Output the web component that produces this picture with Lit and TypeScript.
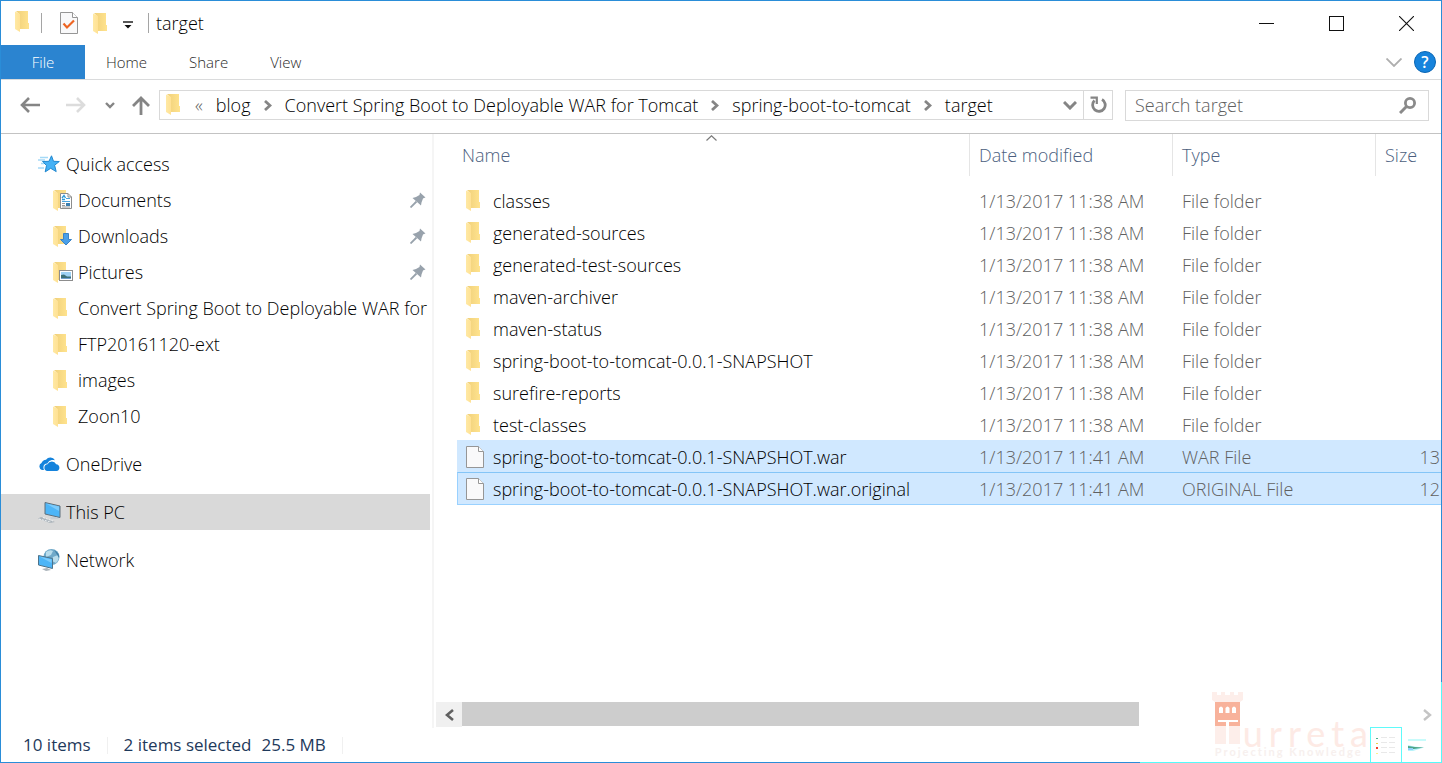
import { LitElement, html, css, svg, nothing } from "lit";
import { customElement, property } from "lit/decorators.js";

const folderShape = svg`
  <defs>
    <linearGradient id="back" x1="0" x2="1"><stop offset="0" stop-color="#f0d07a"/><stop offset="1" stop-color="#ffe38e"/></linearGradient>
    <linearGradient id="flap" x1="0" x2="1"><stop offset="0" stop-color="#ffe9a4"/><stop offset="1" stop-color="#ffe194"/></linearGradient>
  </defs>
  <path d="M1 0H13V12H14V18H4V3Z" fill="url(#back)"/>
  <path d="M0 0.5L5 3V21L0 18Z" fill="url(#flap)"/>`;

const page = svg`
  <path d="M0.5 0.5H12.500L17.500 5.500V21.500H0.500Z" fill="#f9f9fa" stroke="#969696"/>
  <path d="M12.500 0.500V5.500H17.500" fill="#fff" stroke="#969696"/>`;

const icons: Record<string, { w: number; h: number; d: unknown }> = {
  folder: { w: 14, h: 21, d: folderShape },
  documents: {
    w: 20, h: 21,
    d: svg`${folderShape}<path d="M7.500 3.500H15L18.500 7V18.500H7.500Z" fill="#fff" stroke="#8d8d8d"/><path d="M15 3.500V7H18.500" fill="none" stroke="#8d8d8d"/>
      <path d="M9 8L11 5.500L12.500 8M9 9.500H12" stroke="#2f9ad8" stroke-width="1.400" fill="none"/><path d="M13 8.500H17M9 11.500H17" stroke="#4aa3dc"/><path d="M9 13.500H12M9 15.500H12M9 17H17" stroke="#999"/><rect x="13" y="13" width="4" height="3" fill="#3c7fb0"/>`,
  },
  downloads: { w: 20, h: 21, d: svg`${folderShape}<path d="M10.500 7.500H15.500V13.500H18.500L13 19L7.500 13.500H10.500Z" fill="#4a9fe8" stroke="#3a83c6"/>` },
  pictures: {
    w: 20, h: 21,
    d: svg`${folderShape}<rect x="6.500" y="8.500" width="13" height="10" fill="#fff" stroke="#8d8d8d"/><rect x="8" y="10" width="10" height="7" fill="#9fd2f5"/><path d="M8 13L11 12.500L14 14.500H18V17H8Z" fill="#3d7179"/><path d="M8 16H18V17H8Z" fill="#6f9fcf"/>`,
  },
  star: {
    w: 22, h: 18,
    d: svg`<path d="M13.500 0.800L15.500 6.300L21.300 6.500L16.600 10.200L18.200 16.600L12.700 13.300L7.200 16.900L8.500 10.500L4.500 6.500L11 6.300Z" fill="#45b1f5" stroke="#2288cf"/><path d="M2 2.500H10M0 5H7M3 8.500H6M0 13H6" stroke="#a5d9f7" stroke-width="1.300"/>`,
  },
  cloud: {
    w: 22, h: 14,
    d: svg`<path d="M4 13A3.800 3.800 0 0 1 3.500 6A5 5 0 0 1 8 2.700A5.500 5.500 0 0 1 17 3.200C12 2 10 5 9.500 6.500C6 6.500 4.500 9.500 6 13Z" fill="#1583dc"/><path d="M9 14A3.400 3.400 0 0 1 9.500 7.300A4.800 4.800 0 0 1 18.200 7.200A3.500 3.500 0 0 1 19 14Z" fill="#1583dc"/>`,
  },
  pc: {
    w: 23, h: 21,
    d: svg`<path d="M7 0.500L22 4V15.500L7 12Z" fill="#4db5f7" stroke="#5f6f7b"/><path d="M8 1.500L21 4.500V9Z" fill="#7bcbfb"/><path d="M12 15L18 15L21 17L13 17Z" fill="#c9cfd4"/><path d="M0 16.500L3 15L12 18L17 20L12 21Z" fill="#aab3ba"/><path d="M1 17L13 20M5 15.500L15 19" stroke="#eef1f3" stroke-dasharray="2 1"/>`,
  },
  network: {
    w: 22, h: 22,
    d: svg`<circle cx="13.500" cy="8" r="8" fill="#6fa9c9"/><path d="M8 3Q12 0 15 2L13 6L8 8ZM15 8L20 6Q22 10 18 14L14 12Z" fill="#b8dceb"/><path d="M16 1Q22 4 21 9L18 4Z" fill="#3f7fa6"/><path d="M0.500 6.500L14.500 9.500V19.500L0.500 16Z" fill="#4db5f7" stroke="#4e7288"/><path d="M1.500 7.500L13.500 10.500V14Z" fill="#7bcbfb"/><path d="M4 20L9 19L13 21L8 22Z" fill="#aab3ba"/>`,
  },
  page: { w: 18, h: 22, d: page },
  properties: { w: 18, h: 22, d: svg`${page}<path d="M3.500 11.500L7 15.500L14 8.500" fill="none" stroke="#ee6523" stroke-width="2.200"/>` },
  pin: {
    w: 16, h: 16,
    d: svg`<path d="M10 0.500L15.500 5.500L14 6L13 6.500L11.500 10.500L11 13.500L2.500 6L6 5L9.500 3Z" fill="#98a2ac"/><path d="M6.500 9.500L0.500 15.500" stroke="#98a2ac" stroke-width="1.800"/>`,
  },
  more: { w: 10, h: 8, d: svg`<path d="M0 1H10" stroke="#111" stroke-width="1.400"/><path d="M1.500 4H8.500L5 7.500Z" fill="#111"/>` },
  minimize: { w: 15, h: 15, d: svg`<path d="M0 7.500H15" stroke="#111"/>` },
  maximize: { w: 15, h: 15, d: svg`<rect x="0.500" y="0.500" width="14" height="14" fill="none" stroke="#111"/>` },
  close: { w: 15, h: 15, d: svg`<path d="M0 0L15 15M15 0L0 15" stroke="#111" stroke-width="1.100"/>` },
  expand: { w: 16, h: 9, d: svg`<path d="M0.500 0.500L8 8L15.500 0.500" fill="none" stroke="#aeaeae" stroke-width="1.800"/>` },
  back: { w: 20, h: 16, d: svg`<path d="M20 8H2M9 1L2 8L9 15" fill="none" stroke="#858585" stroke-width="2.600"/>` },
  forward: { w: 20, h: 16, d: svg`<path d="M0 8H18M11 1L18 8L11 15" fill="none" stroke="#dcdcdc" stroke-width="2.600"/>` },
  recent: { w: 10, h: 7, d: svg`<path d="M1 1L5 5L9 1" fill="none" stroke="#858585" stroke-width="2.400"/>` },
  up: { w: 18, h: 19, d: svg`<path d="M9 19V2M1 10L9 2L17 10" fill="none" stroke="#858585" stroke-width="2.800"/>` },
  crumb: { w: 8, h: 11, d: svg`<path d="M1 1L6 5.500L1 10" fill="none" stroke="#858585" stroke-width="2.800"/>` },
  drop: { w: 14, h: 9, d: svg`<path d="M1 1L7 7L13 1" fill="none" stroke="#858585" stroke-width="3"/>` },
  refresh: { w: 17, h: 18, d: svg`<path d="M12 3.500A6.300 6.300 0 1 1 4.500 4.500" fill="none" stroke="#858585" stroke-width="2.800"/><path d="M0.500 1.600H6.800V8" fill="none" stroke="#858585" stroke-width="2.200"/>` },
  search: { w: 17, h: 17, d: svg`<circle cx="11" cy="6" r="4.600" fill="none" stroke="#8a8a8a" stroke-width="2.800"/><path d="M7.500 9.500L1 16" stroke="#8a8a8a" stroke-width="3"/>` },
  sort: { w: 11, h: 6, d: svg`<path d="M0.500 5.500L5.500 0.800L10.500 5.500" fill="none" stroke="#7a7a7a" stroke-width="1.200"/>` },
  left: { w: 9, h: 12, d: svg`<path d="M8 1L2 6L8 11" fill="none" stroke="#606060" stroke-width="2.600"/>` },
  right: { w: 9, h: 12, d: svg`<path d="M1 1L7 6L1 11" fill="none" stroke="#c4c4c4" stroke-width="2.400"/>` },
  details: {
    w: 20, h: 18,
    d: svg`<path d="M5 1.500H11M13 1.500H19M5 6.500H11M13 6.500H19M5 11.500H11M13 11.500H19M5 16.500H11M13 16.500H19" stroke="#e9e9e9"/><path d="M0 2.500H2" stroke="#4fae8b"/><path d="M0 7.500H2" stroke="#ecd24a"/><path d="M0 12H2" stroke="#f0402c" stroke-width="2"/><path d="M0 17.500H2" stroke="#fff08a"/>`,
  },
  thumbs: {
    w: 18, h: 13,
    d: svg`<path d="M0 1H18" stroke="#c8fbfb" stroke-width="2"/><path d="M0 6L6 7.500L16 8.500L5 12H0Z" fill="#b7f3fb"/><path d="M0 7L7 8L16 8.500L6 10H0Z" fill="#4fa58a"/><path d="M0 10H5" stroke="#8fd0fa" stroke-width="2"/>`,
  },
  tower: {
    w: 31, h: 52,
    d: svg`<path d="M0 0H5V3H9V0H13V3H18V0H22V3H26V0H31V8L28 10H3L0 8Z" fill="#fdeeea"/><path d="M3 10H28V34H3Z" fill="#f8b29b"/><path d="M3 34H14V52H3ZM17 34H28V52H17Z" fill="#fdeeea"/><path d="M7 21V16Q9 13 11 16V21ZM13.500 21V16Q15.500 13 17.500 16V21ZM20 21V16Q22 13 24 16V21ZM6 28H26V30H17V34H14V30H6Z" fill="#fff"/>`,
  },
};

const icon = (name: string) => {
  const i = icons[name];
  return html`<svg aria-hidden="true" width=${i.w} height=${i.h} viewBox="0 0 ${i.w} ${i.h}">${i.d}</svg>`;
};

const base = css`
  * { box-sizing: border-box; }
  svg { display: block; flex: none; }
  button, input { font: inherit; color: inherit; border: 0; background: none; padding: 0; margin: 0; }
  a { color: inherit; text-decoration: none; }
`;

interface Place { label: string; icon: string; level: number; pinned?: boolean; current?: boolean; }

@customElement("nav-pane")
export class NavPane extends LitElement {
  static styles = [base, css`
    :host { box-sizing: border-box; display: block; width: 433px; flex: none; border-right: 2px solid #f5f5f5; padding: 12px 2px 0 0; }
    ul { list-style: none; margin: 0; padding: 0; }
    .root { margin-bottom: 12px; }
    .place { display: flex; align-items: center; height: 36px; padding-left: 37px; white-space: nowrap; overflow: hidden; }
    .place.child { padding-left: 52px; }
    .place.current { background: #d9d9d9; }
    .glyph { width: 28px; flex: none; display: flex; align-items: center; }
    .child .glyph { width: 25px; }
    .label { flex: 1; min-width: 0; overflow: hidden; }
    .pin { padding: 0 4px 0 8px; }
  `];

  private groups: Place[][] = [
    [
      { label: "Quick access", icon: "star", level: 0 },
      { label: "Documents", icon: "documents", level: 1, pinned: true },
      { label: "Downloads", icon: "downloads", level: 1, pinned: true },
      { label: "Pictures", icon: "pictures", level: 1, pinned: true },
      { label: "Convert Spring Boot to Deployable WAR for", icon: "folder", level: 1 },
      { label: "FTP20161120-ext", icon: "folder", level: 1 },
      { label: "images", icon: "folder", level: 1 },
      { label: "Zoon10", icon: "folder", level: 1 },
    ],
    [{ label: "OneDrive", icon: "cloud", level: 0 }],
    [{ label: "This PC", icon: "pc", level: 0, current: true }],
    [{ label: "Network", icon: "network", level: 0 }],
  ];

  render() {
    return html`<nav>${this.groups.map((g) => html`<ul class="root">${g.map((p) => html`
      <li><a href="#" class="place ${p.level ? "child" : ""} ${p.current ? "current" : ""}">
        <span class="glyph">${icon(p.icon)}</span><span class="label">${p.label}</span>
        ${p.pinned ? html`<span class="pin">${icon("pin")}</span>` : nothing}
      </a></li>`)}</ul>`)}</nav>`;
  }
}

interface Entry { name: string; date: string; type: string; size?: string; selected?: boolean; }

@customElement("file-list")
export class FileList extends LitElement {
  static styles = [base, css`
    :host { display: flex; flex-direction: column; flex: 1; min-width: 0; }
    .scroller { flex: 1; overflow: hidden; padding-left: 23px; position: relative; }
    table { width: 100%; table-layout: fixed; border-spacing: 0; }
    .name { width: 512px; }
    .meta { width: 203px; }
    th { height: 42px; text-align: left; font-weight: inherit; color: #4c5f80; padding: 0 9px; border-left: 1px solid #e5e5e5; }
    th:first-child { border-left: 0; padding-left: 5px; }
    .gap td { height: 8px; padding: 0; }
    td { height: 32px; padding: 1px 9px 0 10px; color: #606060; white-space: nowrap; overflow: hidden; }
    td:first-child { color: #000; padding-left: 9px; }
    td:last-child { text-align: right; padding-right: 1px; }
    .file { display: flex; align-items: center; }
    .glyph { width: 27px; flex: none; }
    .selected td { background: #d0e8ff; }
    .selected + .selected td { border-top: 1px solid #84c5f7; border-bottom: 1px solid #99d1ff; height: 33px; }
    .selected + .selected td:first-child { border-left: 1px solid #99d1ff; padding-left: 8px; }
    .sort { position: absolute; left: 272px; top: 1px; }
    .bar { display: flex; height: 25px; margin: 0 9px 1px 2px; background: #fff; align-items: stretch; }
    .step { width: 26px; display: flex; align-items: center; justify-content: center; background: #f0f0f0; }
    .step.end { background: none; margin-left: auto; width: 9px; }
    .thumb { background: #cdcdcd; width: 68%; margin-bottom: 1px; }
  `];

  @property({ attribute: false }) entries: Entry[] = [];

  render() {
    return html`
      <div class="scroller">
        <span class="sort">${icon("sort")}</span>
        <table>
          <colgroup><col class="name"><col class="meta"><col class="meta"><col></colgroup>
          <thead><tr><th>Name</th><th>Date modified</th><th>Type</th><th>Size</th></tr></thead>
          <tbody>
            <tr class="gap"><td colspan="4"></td></tr>
            ${this.entries.map((e) => html`<tr class=${e.selected ? "selected" : ""}>
              <td><span class="file"><span class="glyph">${icon(e.size ? "page" : "folder")}</span>${e.name}</span></td>
              <td>${e.date}</td><td>${e.type}</td><td>${e.size ?? ""}</td></tr>`)}
          </tbody>
        </table>
      </div>
      <div class="bar">
        <button class="step" aria-label="Scroll left">${icon("left")}</button>
        <div class="thumb"></div>
        <button class="step end" aria-label="Scroll right">${icon("right")}</button>
      </div>`;
  }
}

@customElement("app-root")
export class AppRoot extends LitElement {
  static styles = [base, css`
    :host { display: flex; flex-direction: column; position: relative; height: 100vh; box-sizing: border-box; border: 1px solid #2a8dd8;
      background: #fff; color: #000; font: 300 18px/24px "Open Sans", "Noto Sans", sans-serif; }
    .title { display: flex; align-items: center; height: 44px; flex: none; padding-left: 14px; }
    .quick { display: flex; align-items: center; }
    .rule { width: 1px; height: 20px; background: #a5a5a5; }
    .props { margin: 0 15px 0 18px; }
    .more { margin: 4px 15px 0 16px; }
    .first { margin: 0 12px 3px 0; }
    h1 { font: inherit; margin: 0 auto 0 7px; }
    .caption { width: 70px; height: 44px; display: flex; align-items: center; justify-content: center; }
    .ribbon { display: flex; align-items: center; height: 35px; flex: none; border-bottom: 1px solid #dadbdc; font-size: 15px; color: #2b2b2b; padding-right: 5px; }
    .tab { height: 34px; padding: 0 21px; }
    .tab.file { background: #2b84d0; color: #fff; width: 84px; padding: 0; }
    .spacer { flex: 1; }
    .help { width: 22px; height: 22px; border-radius: 50%; background: #1683dc; border: 1px solid #0b66b4; color: #fff; font-size: 16px; font-weight: 600; line-height: 20px; margin-left: 12px; }
    .nav { display: flex; align-items: center; height: 54px; flex: none; border-bottom: 1px solid #c3c3c3; padding: 0 12px 3px 19px; }
    .forward { margin-left: 26px; }
    .recent { margin-left: 19px; }
    .up { margin-left: 17px; }
    .address { display: flex; align-items: center; flex: 1; min-width: 0; height: 30px; margin: 0 12px 0 9px; border: 1px solid #d9d9d9; padding-left: 6px; white-space: nowrap; }
    .address > svg { margin-bottom: 2px; }
    .crumbs { display: flex; align-items: center; gap: 13px; flex: 1; min-width: 0; overflow: hidden; margin-left: 15px; }
    .dots { color: #606060; }
    .refresh { border-left: 1px solid #d9d9d9; height: 28px; width: 29px; display: flex; align-items: center; justify-content: center; margin-left: 6px; }
    .search { display: flex; align-items: center; width: 304px; height: 31px; border: 1px solid #d9d9d9; padding: 0 12px 0 9px; }
    .search input { flex: 1; min-width: 0; outline: 0; }
    .search input::placeholder { color: #606060; opacity: 1; }
    .body { display: flex; flex: 1; min-height: 0; }
    .status { display: flex; align-items: center; height: 34px; flex: none; padding-left: 22px; color: #1e395b; font-weight: 400; font-size: 17px; }
    .status .rule { background: #f0f0f0; height: 17px; margin: 0 16px; }
    .size { margin-left: 10px; }
    .views { margin-left: auto; display: flex; align-items: center; gap: 6px; padding-right: 15px; }
    .view { width: 32px; height: 36px; border: 1px solid #5ffafa; display: flex; align-items: center; justify-content: center; }
    .view.plain { border: 0; width: 18px; }
    .brand { position: absolute; right: 67px; bottom: 4px; pointer-events: none; font-family: Lato, sans-serif; color: #fdeae5; }
    .mark { display: flex; align-items: flex-end; font-size: 36px; font-weight: 400; line-height: 36px; letter-spacing: 6px; height: 52px; }
    .mark span { height: 29px; }
    .slogan { font-size: 11px; line-height: 12px; letter-spacing: 2px; color: #f7f0ee; font-weight: 700; margin: 2px 0 0 3px; }
    .edge { position: absolute; background: #55fafa; }
    .edge.bottom { right: -1px; bottom: -1px; height: 1px; width: 21%; }
    .edge.side { right: -1px; bottom: 0; width: 1px; height: 80px; }
  `];

  private entries: Entry[] = [
    ...["classes", "generated-sources", "generated-test-sources", "maven-archiver", "maven-status",
      "spring-boot-to-tomcat-0.0.1-SNAPSHOT", "surefire-reports", "test-classes",
    ].map((name) => ({ name, date: "1/13/2017 11:38 AM", type: "File folder" })),
    { name: "spring-boot-to-tomcat-0.0.1-SNAPSHOT.war", date: "1/13/2017 11:41 AM", type: "WAR File", size: "13", selected: true },
    { name: "spring-boot-to-tomcat-0.0.1-SNAPSHOT.war.original", date: "1/13/2017 11:41 AM", type: "ORIGINAL File", size: "12", selected: true },
  ];

  private path = ["blog", "Convert Spring Boot to Deployable WAR for Tomcat", "spring-boot-to-tomcat", "target"];

  render() {
    return html`
      <header class="title">
        <div class="quick">
          <span class="first">${icon("folder")}</span><span class="rule"></span>
          <button class="props" aria-label="Properties">${icon("properties")}</button>
          <button aria-label="New folder">${icon("folder")}</button>
          <button class="more" aria-label="Customize toolbar">${icon("more")}</button>
          <span class="rule"></span>
        </div>
        <h1>target</h1>
        <button class="caption" aria-label="Minimize">${icon("minimize")}</button>
        <button class="caption" aria-label="Maximize">${icon("maximize")}</button>
        <button class="caption" aria-label="Close">${icon("close")}</button>
      </header>
      <div class="ribbon">
        <button class="tab file">File</button><button class="tab">Home</button><button class="tab">Share</button><button class="tab">View</button>
        <span class="spacer"></span>
        <button aria-label="Expand ribbon">${icon("expand")}</button>
        <button class="help" aria-label="Help">?</button>
      </div>
      <div class="nav">
        <button aria-label="Back">${icon("back")}</button>
        <button class="forward" aria-label="Forward">${icon("forward")}</button>
        <button class="recent" aria-label="Recent locations">${icon("recent")}</button>
        <button class="up" aria-label="Up">${icon("up")}</button>
        <div class="address">
          ${icon("folder")}
          <div class="crumbs"><span class="dots">«</span>${this.path.map((p, i) => html`${i ? icon("crumb") : nothing}<a href="#">${p}</a>`)}</div>
          <button aria-label="Previous locations">${icon("drop")}</button>
          <button class="refresh" aria-label="Refresh">${icon("refresh")}</button>
        </div>
        <label class="search"><input type="search" aria-label="Search target" placeholder="Search target">${icon("search")}</label>
      </div>
      <div class="body"><nav-pane></nav-pane><file-list .entries=${this.entries}></file-list></div>
      <footer class="status">
        <span>10 items</span><span class="rule"></span><span>2 items selected</span><span class="size">25.5 MB</span><span class="rule"></span>
        <div class="views">
          <button class="view" aria-label="Details">${icon("details")}</button>
          <button class="view plain" aria-label="Large icons">${icon("thumbs")}</button>
        </div>
      </footer>
      <div class="brand"><div class="mark">${icon("tower")}<span>urreta</span></div><div class="slogan">Projecting Knowledge</div></div>
      <span class="edge bottom"></span><span class="edge side"></span>`;
  }
}
